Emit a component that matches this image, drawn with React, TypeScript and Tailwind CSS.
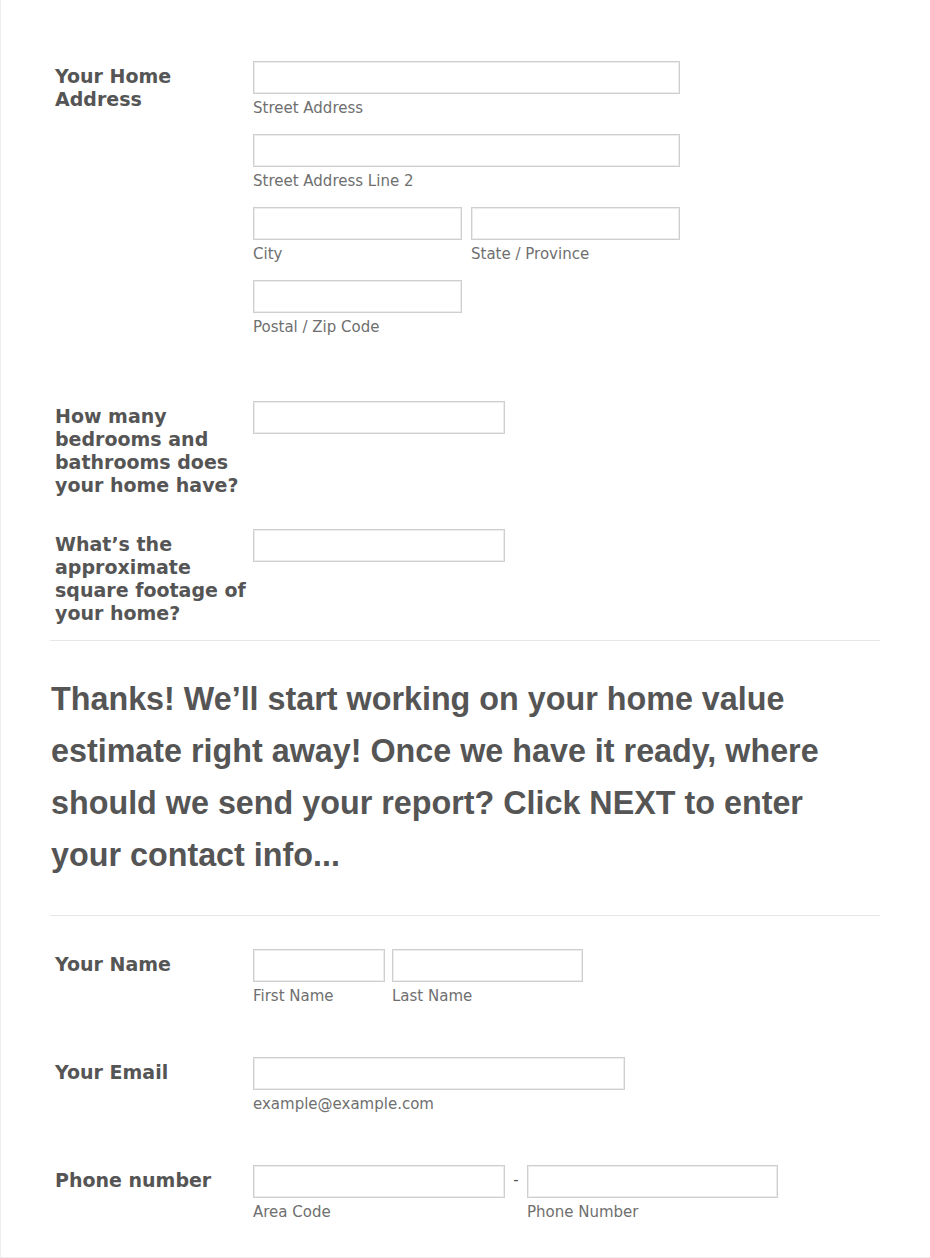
import React from "react";

const labelCls =
  "w-[203px] shrink-0 pl-[5px] pt-[4px] font-['DejaVu_Sans',Verdana,sans-serif] text-[19px] font-bold leading-[23px] text-[#555555]";
const subCls =
  "mt-[5px] block font-['DejaVu_Sans',Verdana,sans-serif] text-[15px] leading-[18px] text-[#6f6f6f]";
const inputCls =
  "block h-[33px] border border-[#cfcfcf] bg-white shadow-[inset_0_0_0_1px_#ececec] outline-none";

function Field({ width, sub }: { width: string; sub?: string }) {
  return (
    <div className="flex flex-col">
      <input type="text" className={`${inputCls} ${width}`} />
      {sub && <span className={subCls}>{sub}</span>}
    </div>
  );
}

export default function App() {
  return (
    <div className="min-h-[1258px] bg-white">
      <div className="border-b border-l border-[#eeeeee] pl-[49px] pr-[50px] pt-[45px] pb-[36px]">
        <ul>
          {/* address */}
          <li className="flex py-4">
            <label className={labelCls}>Your Home Address</label>
            <div className="flex flex-col pb-[33px]">
              <div className="mb-[17px]">
                <Field width="w-[427px]" sub="Street Address" />
              </div>
              <div className="mb-[17px]">
                <Field width="w-[427px]" sub="Street Address Line 2" />
              </div>
              <div className="mb-[17px] flex gap-[9px]">
                <Field width="w-[209px]" sub="City" />
                <Field width="w-[209px]" sub="State / Province" />
              </div>
              <Field width="w-[209px]" sub="Postal / Zip Code" />
            </div>
          </li>

          <li className="flex py-4">
            <label className={labelCls}>How many bedrooms and bathrooms does your home have?</label>
            <Field width="w-[252px]" />
          </li>

          <li className="flex pt-4 pb-[15px]">
            <label className={labelCls}>What’s the approximate square footage of your home?</label>
            <Field width="w-[252px]" />
          </li>

          <li className="border-y border-[#e6e6e6] pt-[32px] pb-[34px]">
            <p className="pl-[1px] pr-[40px] font-['Liberation_Sans',Arial,sans-serif] text-[32.3px] font-bold leading-[52px] text-[#555555]">
              Thanks! We’ll start working on your home value estimate right away! Once we have it
              ready, where should we send your report? Click NEXT to enter your contact info...
            </p>
          </li>

          <li className="flex pt-[33px] pb-[26px]">
            <label className={labelCls}>Your Name</label>
            <div className="flex gap-[7px]">
              <Field width="w-[132px]" sub="First Name" />
              <Field width="w-[191px]" sub="Last Name" />
            </div>
          </li>

          <li className="flex py-[26px]">
            <label className={labelCls}>Your Email</label>
            <Field width="w-[372px]" sub="example@example.com" />
          </li>

          <li className="flex pt-[26px]">
            <label className={labelCls}>Phone number</label>
            <div className="flex items-start">
              <Field width="w-[252px]" sub="Area Code" />
              <span className="w-[22px] pt-[6px] text-center font-['DejaVu_Sans',Verdana,sans-serif] text-[15px] leading-[18px] text-[#555555]">
                -
              </span>
              <Field width="w-[251px]" sub="Phone Number" />
            </div>
          </li>
        </ul>
      </div>
    </div>
  );
}
